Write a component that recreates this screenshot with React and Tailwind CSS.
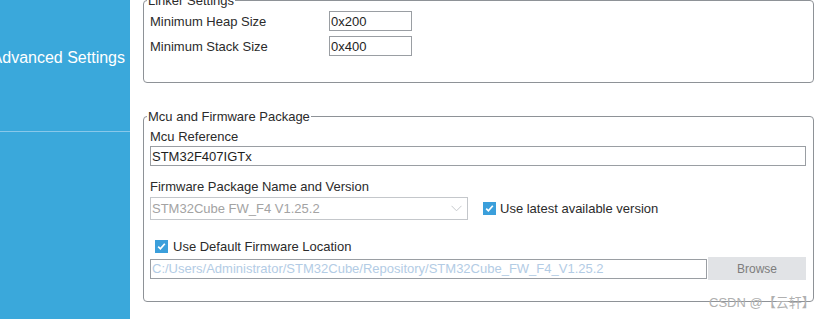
import React from 'react';

const labelCls = "text-[13px] leading-[15px] text-[#2b2b2b]";

function Check() {
  return (
    <span className="w-[13px] h-[13px] bg-[#3b9fdb] flex items-center justify-center shrink-0">
      <svg width="11" height="11" viewBox="0 0 11 11">
        <path d="M2.2 5.6 L4.4 7.8 L8.8 2.8" fill="none" stroke="#ffffff" strokeWidth="1.7" />
      </svg>
    </span>
  );
}

function Box({ value, className = '', textCls = 'text-[#1e1e1e]' }) {
  return (
    <div className={`border border-[#9a9ea3] bg-white flex items-center pl-[1px] text-[13px] leading-[15px] whitespace-nowrap overflow-hidden ${textCls} ${className}`}>
      {value}
    </div>
  );
}

export default function App() {
  return (
    <div className="w-[837px] h-[319px] flex overflow-hidden bg-white relative" style={{ fontFamily: '"Liberation Sans", Arial, sans-serif' }}>
      {/* left nav */}
      <div className="w-[130px] shrink-0 bg-[#3aa8db] flex flex-col">
        <div className="h-[132px] border-b border-[#88c8ea] pt-[49px] flex justify-end pr-[5px] overflow-hidden">
          <span className="text-[16px] leading-[18px] text-white whitespace-nowrap">Advanced Settings</span>
        </div>
      </div>

      {/* settings */}
      <div className="flex-1 pl-[13px] pr-[23px]">
        <fieldset className="border border-[#8e9297] rounded-[4px] mt-[-7px] h-[90px]">
          <legend className="ml-[3px] px-[1px] text-[13px] leading-[15px] text-[#2b2b2b]">Linker Settings</legend>
          <div className="px-[6px] pt-[3px] flex flex-col gap-[5px]">
            <div className="flex items-center">
              <span className={`${labelCls} w-[179px]`}>Minimum Heap Size</span>
              <Box value="0x200" className="w-[83px] h-[20px]" />
            </div>
            <div className="flex items-center">
              <span className={`${labelCls} w-[179px]`}>Minimum Stack Size</span>
              <Box value="0x400" className="w-[83px] h-[20px]" />
            </div>
          </div>
        </fieldset>

        <fieldset className="border border-[#8e9297] rounded-[4px] mt-[26px] h-[193px]">
          <legend className="ml-[3px] px-[1px] text-[13px] leading-[15px] text-[#2b2b2b]">Mcu and Firmware Package</legend>
          <div className="px-[6px] pt-[5px] flex flex-col">
            <span className={labelCls}>Mcu Reference</span>
            <Box value="STM32F407IGTx" className="mt-[2px] w-[656px] h-[20px]" />
            <span className={`${labelCls} mt-[13px]`}>Firmware Package Name and Version</span>
            <div className="mt-[3px] flex items-center">
              <div className="w-[318px] h-[23px] border border-[#c4c7cb] bg-white flex items-center justify-between pl-[1px] pr-[5px]">
                <span className="text-[13px] leading-[15px] text-[#a3a3a3]">STM32Cube FW_F4 V1.25.2</span>
                <svg width="11" height="7" viewBox="0 0 11 7">
                  <path d="M0.5 0.8 L5.5 5.8 L10.5 0.8" fill="none" stroke="#c6c9cd" strokeWidth="1" />
                </svg>
              </div>
              <div className="ml-[15px] flex items-center gap-[4px]">
                <Check />
                <span className={labelCls}>Use latest available version</span>
              </div>
            </div>
            <div className="mt-[19px] ml-[5px] flex items-center gap-[5px]">
              <Check />
              <span className={labelCls}>Use Default Firmware Location</span>
            </div>
            <div className="mt-[3px] flex items-center">
              <Box value="C:/Users/Administrator/STM32Cube/Repository/STM32Cube_FW_F4_V1.25.2" className="w-[557px] h-[20px]" textCls="text-[#b3cce5]" />
              <div className="w-[98px] h-[23px] ml-[1px] bg-[#e1e3e6] flex items-center justify-center text-[12px] leading-[14px] text-[#7d7d7d]">Browse</div>
            </div>
          </div>
        </fieldset>
      </div>

      <span className="absolute left-[709px] top-[295px] text-[13px] leading-[16px] text-[#b0b0b0] whitespace-nowrap" style={{ fontFamily: '"Liberation Sans", "Noto Sans CJK SC", sans-serif' }}>CSDN @【云轩】</span>
    </div>
  );
}
